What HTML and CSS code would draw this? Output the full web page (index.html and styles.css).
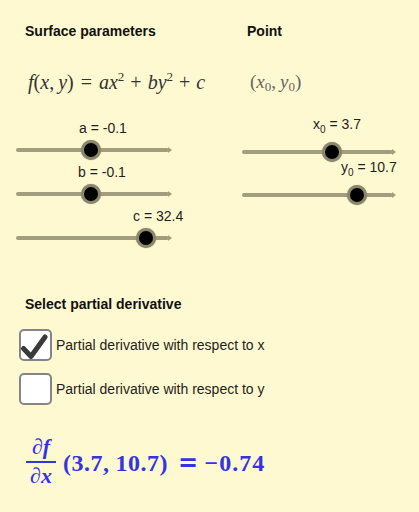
FILE: index.html
```html
<!DOCTYPE html>
<html lang="en">
<head>
    <meta charset="UTF-8">
    <title>Partial derivatives</title>
    <link rel="stylesheet" href="styles.css">
</head>
<body>
    <div id="top">
        <div class="col col-left">
            <h2 class="heading">Surface parameters</h2>
            <div class="formula">
                <i>f</i>(<i>x</i>,<span class="thin"></span><i>y</i>)<span class="op">=</span><i>ax</i><sup>2</sup><span class="bin">+</span><i>by</i><sup>2</sup><span class="bin">+</span><i>c</i>
            </div>
            <div class="sliders">
                <div class="slider">
                    <div class="slider-label" style="padding-left: 63px">a = -0.1</div>
                    <div class="slider-track"><span class="knob" style="left: 75px"></span></div>
                </div>
                <div class="slider">
                    <div class="slider-label" style="padding-left: 62px">b = -0.1</div>
                    <div class="slider-track"><span class="knob" style="left: 75px"></span></div>
                </div>
                <div class="slider">
                    <div class="slider-label" style="padding-left: 117px">c = 32.4</div>
                    <div class="slider-track"><span class="knob" style="left: 130px"></span></div>
                </div>
            </div>
        </div>
        <div class="col col-right">
            <h2 class="heading">Point</h2>
            <div class="formula point">(<i>x</i><sub>0</sub>,<span class="thin"></span><i>y</i><sub>0</sub>)</div>
            <div class="sliders">
                <div class="slider">
                    <div class="slider-label" style="padding-left: 71px">x<sub>0</sub> = 3.7</div>
                    <div class="slider-track"><span class="knob" style="left: 90px"></span></div>
                </div>
                <div class="slider">
                    <div class="slider-label" style="padding-left: 99px">y<sub>0</sub> = 10.7</div>
                    <div class="slider-track"><span class="knob" style="left: 115px"></span></div>
                </div>
            </div>
        </div>
    </div>

    <div id="derivative">
        <h2 class="heading">Select partial derivative</h2>
        <div class="options">
            <label class="option">
                <span class="check-box">
                    <svg width="32" height="32" viewBox="0 0 32 32"><path d="M4.5 19.5 L12 27.5 L26 8" fill="none" stroke="#3a3a3a" stroke-width="5" stroke-linecap="round" stroke-linejoin="round"/></svg>
                </span>
                Partial derivative with respect to x
            </label>
            <label class="option">
                <span class="check-box"></span>
                Partial derivative with respect to y
            </label>
        </div>
        <div class="result">
            <span class="frac">
                <span class="num">&part;<i>f</i></span>
                <span class="den">&part;<i>x</i></span>
            </span>
            <span class="value">(3.7,<span class="thin"></span>10.7)<span class="rel">=</span><span class="neg">&minus;0.74</span></span>
        </div>
    </div>
</body>
</html>
```

FILE: styles.css
```css
*{
    padding: 0;
    margin: 0;
    box-sizing: border-box;
}
body{
    width: 419px;
    height: 512px;
    background: #fef9d0;
    font-family: "Liberation Sans", Arial, sans-serif;
    font-size: 14px;
    line-height: 16px;
    color: #1e1e1e;
    overflow: hidden;
}
.heading{
    font-size: 14px;
    line-height: 16px;
    font-weight: bold;
    color: #111;
}

/* top part: two columns */
#top{
    display: grid;
    grid-template-columns: 226px 154px;
    padding: 23px 0 0 16px;
}
.col-left .heading{
    margin-left: 9px;
}
.col-right .heading{
    margin-left: 5px;
}
.formula{
    margin-top: 33px;
    margin-left: 12px;
    height: 20px;
    font-family: "Liberation Serif", "Times New Roman", serif;
    font-size: 20px;
    line-height: 20px;
    color: #333;
    white-space: nowrap;
}
.formula i{
    font-style: italic;
}
.formula sup{
    font-size: 13px;
    vertical-align: 8px;
    line-height: 0;
}
.formula sub{
    font-size: 13px;
    vertical-align: -3px;
    line-height: 0;
}
.formula .op{
    margin: 0 7px;
}
.formula .bin{
    margin: 0 6px;
}
.thin{
    display: inline-block;
    width: 4px;
}
.formula.point{
    margin-left: 8px;
    font-size: 19px;
    color: #666;
}

/* sliders */
.sliders{
    display: flex;
    flex-direction: column;
}
.col-left .sliders{
    width: 156px;
    margin-top: 28px;
    gap: 7px;
}
.col-right .sliders{
    width: 154px;
    margin-top: 24px;
}
.slider-label{
    font-size: 14px;
    line-height: 16px;
    white-space: nowrap;
}
.slider-label sub{
    font-size: 10px;
    vertical-align: -4px;
    line-height: 0;
}
.slider-track{
    position: relative;
    height: 14px;
    margin-top: 7px;
}
.col-right .slider-track{
    margin-top: 13px;
}
.slider-track::before{
    content: "";
    position: absolute;
    left: 0;
    right: 3px;
    top: 5px;
    height: 4px;
    border-radius: 2px;
    background: #a29e7d;
}
.slider-track::after{
    content: "";
    position: absolute;
    right: 0;
    top: 4px;
    border-left: 4px solid #a29e7d;
    border-top: 3px solid transparent;
    border-bottom: 3px solid transparent;
}
.knob{
    position: absolute;
    top: 7px;
    width: 20px;
    height: 20px;
    margin: -10px 0 0 -10px;
    border-radius: 50%;
    background: #000;
    border: 3px solid #8b876c;
    box-shadow: 0 0 1px #8b876c;
}

/* bottom part */
#derivative{
    margin-top: 51px;
}
#derivative .heading{
    margin-left: 25px;
}
.options{
    display: flex;
    flex-direction: column;
    gap: 12px;
    margin: 17px 0 0 19px;
}
.option{
    display: flex;
    align-items: center;
    gap: 4px;
    font-size: 14px;
}
.check-box{
    width: 33px;
    height: 32px;
    background: #fff;
    border: 2px solid #858585;
    border-radius: 5px;
    position: relative;
}
.check-box svg{
    position: absolute;
    left: -2px;
    top: -2px;
}
.result{
    display: flex;
    align-items: center;
    margin: 30px 0 0 26px;
    color: #3434e0;
    font-family: "Liberation Serif", "Times New Roman", serif;
    font-weight: bold;
}
.frac{
    display: flex;
    flex-direction: column;
    align-items: center;
    width: 30px;
    font-size: 22px;
    line-height: 23px;
}
.frac i{
    font-style: italic;
}
.num{
    border-bottom: 2px solid #3434e0;
    width: 100%;
    text-align: center;
    padding-bottom: 3px;
}
.den{
    padding-top: 1px;
}
.value{
    margin-left: 7px;
    margin-top: 4px;
    font-size: 24px;
    letter-spacing: 0.5px;
    white-space: nowrap;
}
.value .rel{
    font-family: "DejaVu Sans", sans-serif;
    margin: 0 6px 0 10px;
}
.value .neg{
    letter-spacing: 1px;
}
.value .thin{
    width: 6px;
}
```
